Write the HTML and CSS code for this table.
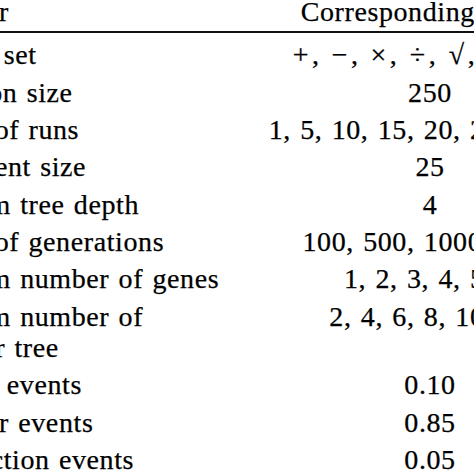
FILE: index.html
```html
<!DOCTYPE html>
<html lang="en">
<head>
    <meta charset="UTF-8">
    <meta name="viewport" content="width=device-width, initial-scale=1.0">
    <title>GP Parameters</title>
    <link rel="stylesheet" href="styles.css">
</head>
<body>
    <div class="params">
        <div class="row head">
            <div class="name">Parameter</div>
            <div class="value">Corresponding values</div>
        </div>

        <div class="rows">
            <div class="row">
                <div class="name">Function set</div>
                <div class="value funcs"><span class="op">+</span>, <span class="op">&minus;</span>, <span class="op">&times;</span>, <span class="op">&divide;</span>, <span class="op">&radic;</span>, exp, log</div>
            </div>
            <div class="row">
                <div class="name">Population size</div>
                <div class="value">250</div>
            </div>
            <div class="row">
                <div class="name">Number of runs</div>
                <div class="value">1, 5, 10, 15, 20, 25, 30, 50</div>
            </div>
            <div class="row">
                <div class="name">Tournament size</div>
                <div class="value">25</div>
            </div>
            <div class="row">
                <div class="name">Maximum tree depth</div>
                <div class="value">4</div>
            </div>
            <div class="row">
                <div class="name">Number of generations</div>
                <div class="value">100, 500, 1000, 5000</div>
            </div>
            <div class="row">
                <div class="name">Maximum number of genes</div>
                <div class="value">1, 2, 3, 4, 5, 6</div>
            </div>
            <div class="row">
                <div class="name">Maximum number of<br>nodes per tree</div>
                <div class="value">2, 4, 6, 8, 10, 12</div>
            </div>
            <div class="row">
                <div class="name">Mutation events</div>
                <div class="value">0.10</div>
            </div>
            <div class="row">
                <div class="name">Crossover events</div>
                <div class="value">0.85</div>
            </div>
            <div class="row">
                <div class="name">Reproduction events</div>
                <div class="value">0.05</div>
            </div>
        </div>
    </div>
</body>
</html>
```

FILE: styles.css
```css
body {
    margin: 0;
    overflow: hidden;
    background-color: #fff;
    color: #000;
    font-family: "Liberation Serif", "Times New Roman", serif;
    font-size: 28px;
    letter-spacing: 0.6px;
    word-spacing: 1.7px;
    -webkit-text-stroke: 0.25px #000; /* scanned table looks a bit heavier */
}

/* table is wider than the window, left part is cut off */
.params {
    width: 720px;
    margin: -7px 0 0 -110px;
}

.row {
    display: grid;
    grid-template-columns: 360px 360px;
    padding: 3.2px 0;
    line-height: 31px;
    white-space: nowrap;
}

.head {
    padding: 3px 0 4px;
    border-bottom: 2px solid #111;
}

.rows {
    padding-top: 3px;
}

.value {
    text-align: center;
}

.funcs {
    text-align: left;
    padding-left: 40px;
}

.op {
    display: inline-block;
    width: 22px;
    text-align: center;
}
```
